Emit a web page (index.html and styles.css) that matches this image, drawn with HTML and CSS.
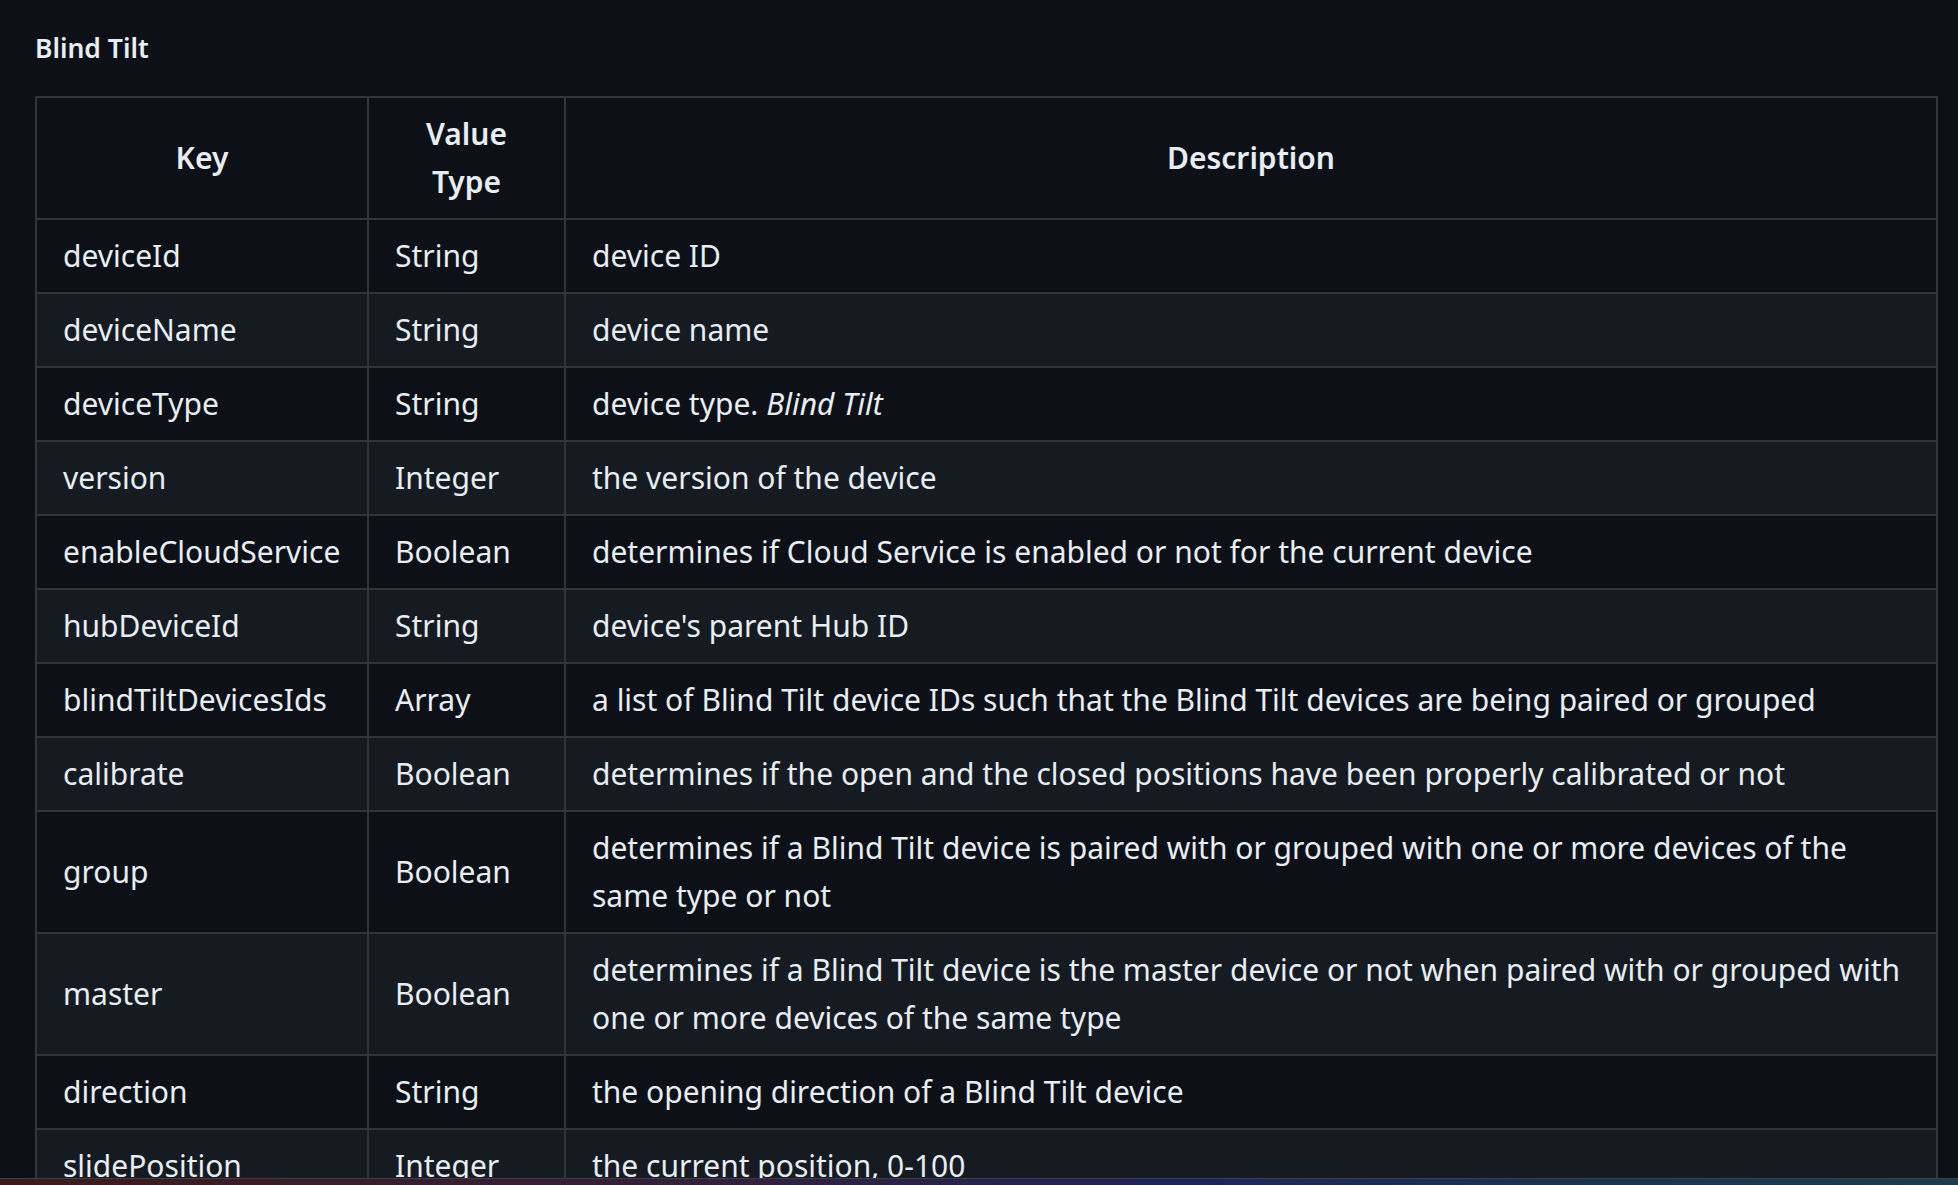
FILE: index.html
```html
<!DOCTYPE html>
<html lang="en">
<head>
<meta charset="utf-8">
<title>Blind Tilt</title>
<link rel="stylesheet" href="styles.css">
</head>
<body>
<main class="doc">
  <h4 class="title">Blind Tilt</h4>
  <table class="spec">
    <colgroup>
      <col class="c-key">
      <col class="c-type">
      <col class="c-desc">
    </colgroup>
    <thead>
      <tr><th>Key</th><th>Value Type</th><th>Description</th></tr>
    </thead>
    <tbody>
      <tr><td>deviceId</td><td>String</td><td>device ID</td></tr>
      <tr><td>deviceName</td><td>String</td><td>device name</td></tr>
      <tr><td>deviceType</td><td>String</td><td>device type. <em>Blind Tilt</em></td></tr>
      <tr><td>version</td><td>Integer</td><td>the version of the device</td></tr>
      <tr><td>enableCloudService</td><td>Boolean</td><td>determines if Cloud Service is enabled or not for the current device</td></tr>
      <tr><td>hubDeviceId</td><td>String</td><td>device's parent Hub ID</td></tr>
      <tr><td>blindTiltDevicesIds</td><td>Array</td><td>a list of Blind Tilt device IDs such that the Blind Tilt devices are being paired or grouped</td></tr>
      <tr><td>calibrate</td><td>Boolean</td><td>determines if the open and the closed positions have been properly calibrated or not</td></tr>
      <tr><td>group</td><td>Boolean</td><td>determines if a Blind Tilt device is paired with or grouped with one or more devices of the same type or not</td></tr>
      <tr><td>master</td><td>Boolean</td><td>determines if a Blind Tilt device is the master device or not when paired with or grouped with one or more devices of the same type</td></tr>
      <tr><td>direction</td><td>String</td><td>the opening direction of a Blind Tilt device</td></tr>
      <tr><td>slidePosition</td><td>Integer</td><td>the current position, 0-100</td></tr>
    </tbody>
  </table>
</main>
<div class="taskbar-edge"></div>
</body>
</html>
```
FILE: styles.css
```css
html, body {
  margin: 0;
  padding: 0;
  background: #0d1117;
  height: 100%;
  overflow: hidden;
}
body {
  color: #e6edf3;
  font-family: "Noto Sans", "Open Sans", sans-serif;
  font-size: 30px;
  line-height: 48px;
}
.doc {
  padding: 24px 22px 0 35px;
}
.title {
  margin: 0 0 24px 0;
  font-size: 26.5px;
  font-weight: 600;
  line-height: 48px;
}
.spec {
  border-collapse: collapse;
  table-layout: fixed;
  width: 1901px;
}
.c-key { width: 332px; }
.c-type { width: 197px; }
.c-desc { width: 1372px; }
.spec th, .spec td {
  border: 2px solid #30363d;
  padding: 12px 26px;
  text-align: left;
  vertical-align: middle;
}
.spec th {
  text-align: center;
  font-weight: 600;
}
.spec tbody tr { background: #0d1117; }
.spec tbody tr:nth-child(2n) { background: #161b22; }
.spec em { font-style: italic; }
.taskbar-edge {
  position: fixed;
  left: 0;
  right: 0;
  bottom: 0;
  height: 6px;
  border-top: 1px solid #3a3f48;
  background: linear-gradient(90deg, #3d1a1c 0%, #33203a 35%, #1e2456 60%, #1b3350 80%, #1c3b48 100%);
}
```
